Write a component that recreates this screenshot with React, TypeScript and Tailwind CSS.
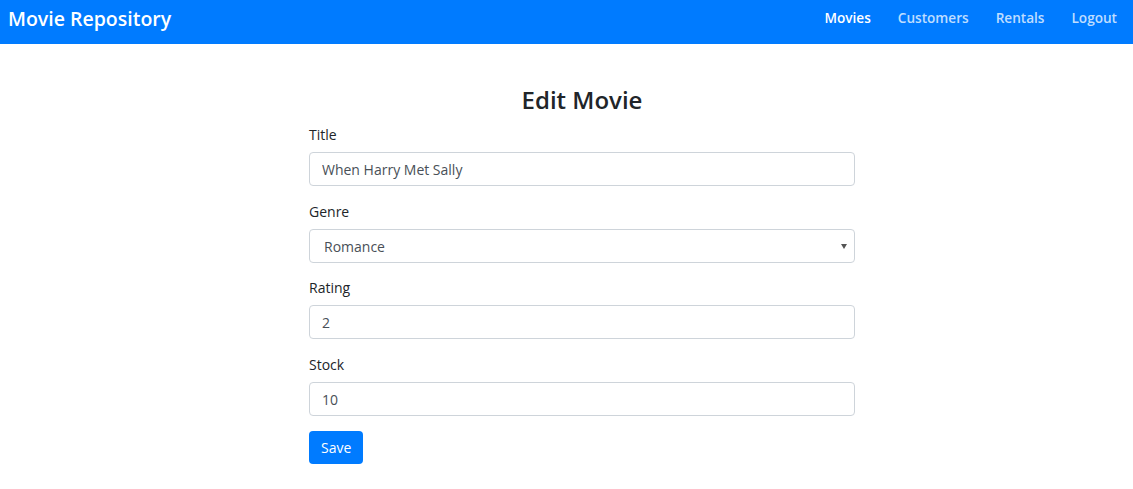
import { useState } from "react";

const font = { fontFamily: '"Open Sans", "Liberation Sans", sans-serif' };

function Navbar() {
    return (
        <nav className="bg-[#007bff] h-[44px] flex items-center justify-between pl-2 pr-4 pb-[7px]">
            <a href="#" className="text-white text-[19.5px] font-semibold leading-none">Movie Repository</a>
            <div className="flex items-center gap-[27px] text-[13.6px] font-semibold">
                <a href="#" className="text-white">Movies</a>
                <a href="#" className="text-white/75">Customers</a>
                <a href="#" className="text-white/75">Rentals</a>
                <a href="#" className="text-white/75">Logout</a>
            </div>
        </nav>
    )
}

function Label({ children }: { children: string }) {
    return <label className="block text-[14px] leading-[21px] pt-[1px] mb-[7px] text-[#212529]">{children}</label>
}

function Field({ label, value }: { label: string; value: string }) {
    const [v, setV] = useState(value);
    return (
        <div className="mb-[14px]">
            <Label>{label}</Label>
            <input
                className="block w-full h-[34px] px-3 text-[14px] text-[#495057] border border-[#ced4da] rounded outline-none"
                value={v}
                onChange={e => setV(e.target.value)}
            />
        </div>
    )
}

export default function App() {
    const [genre, setGenre] = useState("Romance");

    return (
        <div className="min-h-screen bg-white" style={font}>
            <Navbar />
            <div className="pt-[39px] ml-[309px] w-[546px]">
                <h3 className="text-center text-[24px] font-semibold leading-[34px] mb-[6px] text-[#212529]">Edit Movie</h3>
                <form onSubmit={e => e.preventDefault()}>
                    <Field label="Title" value="When Harry Met Sally" />
                    <div className="mb-[13px]">
                        <Label>Genre</Label>
                        <div className="relative">
                            <select
                                className="block w-full h-[34px] pl-[14px] pr-6 text-[14px] text-[#495057] border border-[#ced4da] rounded outline-none appearance-none bg-white"
                                value={genre}
                                onChange={e => setGenre(e.target.value)}
                            >
                                <option>Action</option>
                                <option>Comedy</option>
                                <option>Romance</option>
                                <option>Thriller</option>
                            </select>
                            <svg className="absolute right-[8px] top-[15px] pointer-events-none" width="6" height="5" viewBox="0 0 6 5">
                                <path d="M0 0 L6 0 L3 5 Z" fill="#555" />
                            </svg>
                        </div>
                    </div>
                    <Field label="Rating" value="2" />
                    <div className="mb-[15px]">
                        <Label>Stock</Label>
                        <input
                            className="block w-full h-[34px] px-3 text-[14px] text-[#495057] border border-[#ced4da] rounded outline-none"
                            defaultValue="10"
                        />
                    </div>
                    <button className="bg-[#007bff] text-white text-[14px] h-[33px] px-3 rounded">Save</button>
                </form>
            </div>
        </div>
    )
}
